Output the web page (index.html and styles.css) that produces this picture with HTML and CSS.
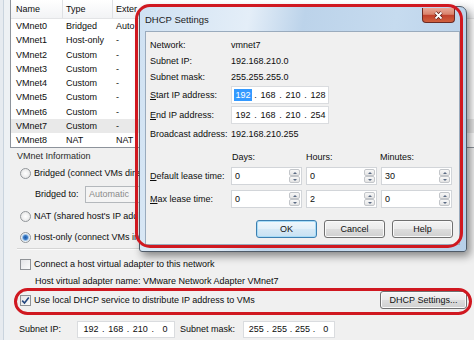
FILE: index.html
```html
<!DOCTYPE html>
<html lang="en">
<head>
    <meta charset="UTF-8">
    <title>Virtual Network Editor</title>
    <link rel="stylesheet" href="styles.css">
</head>
<body>
    <div class="window">
        <div class="frame-left"></div>
        <div class="main">
            <!-- only the part left of the dialog is visible -->
            <div class="net-table">
                <div class="row head"><span class="c1">Name</span><span class="c2">Type</span><span class="c3">Exter</span></div>
                <div class="row"><span class="c1">VMnet0</span><span class="c2">Bridged</span><span class="c3">Auto</span></div>
                <div class="row"><span class="c1">VMnet1</span><span class="c2">Host-only</span><span class="c3">-</span></div>
                <div class="row"><span class="c1">VMnet2</span><span class="c2">Custom</span><span class="c3">-</span></div>
                <div class="row"><span class="c1">VMnet3</span><span class="c2">Custom</span><span class="c3">-</span></div>
                <div class="row"><span class="c1">VMnet4</span><span class="c2">Custom</span><span class="c3">-</span></div>
                <div class="row"><span class="c1">VMnet5</span><span class="c2">Custom</span><span class="c3">-</span></div>
                <div class="row"><span class="c1">VMnet6</span><span class="c2">Custom</span><span class="c3">-</span></div>
                <div class="row selected"><span class="c1">VMnet7</span><span class="c2">Custom</span><span class="c3">-</span></div>
                <div class="row"><span class="c1">VMnet8</span><span class="c2">NAT</span><span class="c3">NAT</span></div>
            </div>

            <div class="info">
                <div class="group-title">VMnet Information</div>
                <div class="opt h20"><span class="radio"></span>Bridged (connect VMs dire</div>
                <div class="bridged-to"><span class="bt-label">Bridged to:</span><span class="combo">Automatic</span></div>
                <div class="opt h22"><span class="radio"></span>NAT (shared host's IP add</div>
                <div class="opt h20"><span class="radio on"></span>Host-only (connect VMs in</div>
                <div class="sep"></div>
                <div class="opt connect"><span class="check"></span>Connect a host virtual adapter to this network</div>
                <div class="adapter">Host virtual adapter name: VMware Network Adapter VMnet7</div>
                <div class="opt h22">
                    <span class="check"><svg width="9" height="9" viewBox="0 0 9 9"><path d="M1.2 4.6 L3.5 7 L7.8 1.6" fill="none" stroke="#23467e" stroke-width="1.6"/></svg></span>
                    Use local DHCP service to distribute IP address to VMs
                    <button class="btn dhcp-btn">DHCP Settings...</button>
                </div>
                <div class="subnet-row">
                    <span class="sn-label">Subnet IP:</span>
                    <span class="ipbox sn-ip"><span class="seg">192</span><span class="dot">.</span><span class="seg">168</span><span class="dot">.</span><span class="seg">210</span><span class="dot">.</span><span class="seg">0</span></span>
                    <span class="sm-label">Subnet mask:</span>
                    <span class="ipbox sn-mask"><span class="seg">255</span><span class="dot">.</span><span class="seg">255</span><span class="dot">.</span><span class="seg">255</span><span class="dot">.</span><span class="seg">0</span></span>
                </div>
            </div>
        </div>
    </div>

    <div class="dialog">
        <div class="titlebar">
            <span class="title">DHCP Settings</span>
            <span class="close"><svg width="11" height="9" viewBox="0 0 11 9"><path d="M2.5 1.5 L8.5 7.5 M8.5 1.5 L2.5 7.5" stroke="#5a1b16" stroke-width="3.2"/><path d="M2.5 1.5 L8.5 7.5 M8.5 1.5 L2.5 7.5" stroke="#fff" stroke-width="1.8"/></svg></span>
        </div>
        <div class="client">
            <div class="drow"><span class="lbl">Network:</span><span>vmnet7</span></div>
            <div class="drow"><span class="lbl">Subnet IP:</span><span>192.168.210.0</span></div>
            <div class="drow"><span class="lbl">Subnet mask:</span><span>255.255.255.0</span></div>
            <div class="drow field-row start-row">
                <span class="lbl"><u>S</u>tart IP address:</span>
                <span class="ipbox dlg-ip"><span class="seg"><span class="hl">192</span></span><span class="dot">.</span><span class="seg">168</span><span class="dot">.</span><span class="seg">210</span><span class="dot">.</span><span class="seg">128</span></span>
            </div>
            <div class="drow field-row">
                <span class="lbl"><u>E</u>nd IP address:</span>
                <span class="ipbox dlg-ip"><span class="seg">192</span><span class="dot">.</span><span class="seg">168</span><span class="dot">.</span><span class="seg">210</span><span class="dot">.</span><span class="seg">254</span></span>
            </div>
            <div class="drow bcast-row"><span class="lbl">Broadcast address:</span><span>192.168.210.255</span></div>
            <div class="drow units-row">
                <span class="lbl"></span>
                <span class="unit">Days:</span><span class="unit">Hours:</span><span class="unit">Minutes:</span>
            </div>
            <div class="drow lease-row default-row">
                <span class="lbl"><u>D</u>efault lease time:</span>
                <span class="spin"><span class="spin-val">0</span><span class="spin-btns"><i class="up"></i><i class="down"></i></span></span>
                <span class="spin"><span class="spin-val">0</span><span class="spin-btns"><i class="up"></i><i class="down"></i></span></span>
                <span class="spin"><span class="spin-val">30</span><span class="spin-btns"><i class="up"></i><i class="down"></i></span></span>
            </div>
            <div class="drow lease-row max-row">
                <span class="lbl"><u>M</u>ax lease time:</span>
                <span class="spin"><span class="spin-val">0</span><span class="spin-btns"><i class="up"></i><i class="down"></i></span></span>
                <span class="spin"><span class="spin-val">2</span><span class="spin-btns"><i class="up"></i><i class="down"></i></span></span>
                <span class="spin"><span class="spin-val">0</span><span class="spin-btns"><i class="up"></i><i class="down"></i></span></span>
            </div>
            <div class="btns">
                <button class="btn focus">OK</button>
                <button class="btn">Cancel</button>
                <button class="btn">Help</button>
            </div>
        </div>
    </div>

    <div class="mark mark-dialog"></div>
    <div class="mark mark-dhcp"></div>
</body>
</html>
```

FILE: styles.css
```css
body {
    margin: 0;
    width: 474px;
    height: 340px;
    overflow: hidden;
    position: relative;
    background-color: #f0f0f0;
    font-family: "Liberation Sans", Arial, sans-serif;
    font-size: 9px;
    color: #0d0d0d;
}

.window {
    display: flex;
    height: 340px;
}

.frame-left {
    width: 10px;
    flex-shrink: 0;
    background: linear-gradient(to right, #e6ebf0 0, #e6ebf0 3px, #c9d4de 3px, #c9d4de 4px, #edf1f4 4px);
}

.main {
    flex: 1;
    display: flex;
    flex-direction: column;
}

/* network list */
.net-table {
    background-color: white;
    border-left: 1px solid #8d939b;
    border-bottom: 1px solid #8d939b;
}

.row {
    display: flex;
    align-items: center;
    height: 14.25px;
}

.row.head {
    height: 19px;
    background: linear-gradient(#ffffff, #f2f3f5);
    border-bottom: 1px solid #e3e4e6;
    box-sizing: border-box;
}

.row.selected {
    background-color: #e9e9e9;
}

.c1 {
    width: 51px;
    padding-left: 5px;
    box-sizing: border-box;
}

.c2 {
    width: 50px;
    padding-left: 4px;
    box-sizing: border-box;
}

.c3 {
    flex: 1;
    padding-left: 4px;
    white-space: nowrap;
}

.head .c2,
.head .c3 {
    border-left: 1px solid #dfe1e4;
    padding-left: 3px;
    line-height: 18px;
}

/* vmnet information */
.group-title {
    margin-top: 1px;
    height: 14px;
    line-height: 14px;
    padding-left: 7px;
    color: #2a2a2a;
}

.opt {
    display: flex;
    align-items: center;
    padding-left: 10px;
    white-space: nowrap;
}

.h20 {
    height: 20px;
}

.h22 {
    height: 22px;
}

.connect {
    margin-top: 5px;
    height: 18px;
}

.radio {
    width: 11px;
    height: 11px;
    border-radius: 50%;
    border: 1px solid #92969a;
    box-sizing: border-box;
    background: radial-gradient(circle, #ffffff 0, #e9e9e9 70%, #d4d4d4 100%);
    margin-right: 3px;
    flex-shrink: 0;
}

.radio.on {
    background: radial-gradient(circle, #1d56a3 0, #3a7cc7 2px, #9fc2e6 3px, #eef2f6 4px, #d6d9dc 100%);
}

.check {
    width: 11px;
    height: 11px;
    border: 1px solid #8f9296;
    box-sizing: border-box;
    background: linear-gradient(135deg, #e3e4e6, #fbfbfb);
    margin-right: 3px;
    flex-shrink: 0;
    display: flex;
    align-items: center;
    justify-content: center;
}

.bridged-to {
    display: flex;
    align-items: center;
    height: 22px;
    padding-left: 25px;
}

.bt-label {
    width: 50px;
}

.combo {
    width: 160px;
    height: 17px;
    line-height: 15px;
    border: 1px solid #b4b8bc;
    box-sizing: border-box;
    background-color: #f4f4f4;
    color: #8b8b8b;
    padding-left: 3px;
}

.sep {
    height: 1px;
    margin: 1px 7px 0 7px;
    background-color: #d5d5d5;
    border-bottom: 1px solid #fbfbfb;
}

.adapter {
    height: 16px;
    line-height: 16px;
    padding-left: 25px;
    white-space: nowrap;
}

.dhcp-btn {
    margin-left: auto;
    margin-right: 7px;
    width: 87px;
    height: 17px;
}

.subnet-row {
    display: flex;
    align-items: center;
    margin-top: 9px;
    height: 18px;
    padding-left: 9px;
}

.sn-label {
    width: 58px;
}

.sm-label {
    width: 63px;
    margin-left: 5px;
}

.ipbox {
    display: flex;
    align-items: center;
    height: 17px;
    box-sizing: border-box;
    background-color: white;
    border: 1px solid #dadcdf;
}

.sn-ip {
    width: 98px;
    padding-left: 4px;
}

.sn-mask {
    width: 92px;
    padding-left: 4px;
}

.seg {
    width: 18px;
    text-align: center;
}

.dot {
    width: 7px;
    text-align: center;
}

.hl {
    background-color: #3399ff;
    color: white;
    padding: 1px 1px;
}

/* buttons */
.btn {
    font-family: inherit;
    font-size: 9px;
    color: #111;
    padding: 0;
    height: 18px;
    border: 1px solid #707070;
    border-radius: 3px;
    background: linear-gradient(#f4f4f4 0%, #ebebeb 48%, #dddddd 52%, #cfcfcf 100%);
    box-shadow: inset 0 0 0 1px #fafafa;
}

.btn.focus {
    border-color: #3c7fb1;
    background: linear-gradient(#f0f7fc 0%, #e3f0f9 48%, #d6e9f6 52%, #c8e1f2 100%);
    box-shadow: inset 0 0 0 1px #a8dcf7;
}

/* dhcp dialog */
.dialog {
    position: absolute;
    left: 139px;
    top: 6px;
    width: 328px;
    height: 246px;
    box-sizing: border-box;
    border: 1px solid #4f5b68;
    border-radius: 7px 7px 3px 3px;
    background: linear-gradient(100deg, #cfe1f2 0%, #e4eef8 30%, #bcd3ea 45%, #c6dbef 70%, #b7cfe8 100%);
    box-shadow: 3px 4px 9px rgba(0, 0, 0, 0.45);
    display: flex;
    flex-direction: column;
}

.titlebar {
    height: 24px;
    display: flex;
    align-items: flex-start;
}

.title {
    padding: 7px 0 0 5px;
    font-size: 9.5px;
    color: #1b1b1b;
}

.close {
    margin-left: auto;
    margin-right: 11px;
    margin-top: 1px;
    width: 33px;
    height: 15px;
    box-sizing: border-box;
    border: 1px solid #6b2a24;
    border-top: none;
    border-radius: 0 0 4px 4px;
    background: linear-gradient(#e9a898 0%, #d9836c 45%, #c1412c 52%, #d0613f 100%);
    display: flex;
    align-items: center;
    justify-content: center;
}

.client {
    flex: 1;
    margin: 0 6px 6px 5px;
    background-color: #f0f0f0;
    border: 1px solid #9aabbd;
    padding: 5px 6px 0 4px;
}

.drow {
    display: flex;
    align-items: center;
    height: 16px;
    white-space: nowrap;
}

.lbl {
    width: 81px;
    flex-shrink: 0;
}

.field-row {
    height: 18px;
    margin-top: 2px;
}

.start-row {
    margin-top: 1px;
}

.dlg-ip {
    width: 98px;
    height: 18px;
    padding-left: 2px;
}

.bcast-row {
    margin-top: 2px;
}

.units-row {
    margin-top: 8px;
    height: 14px;
}

.unit {
    width: 71px;
    margin-right: 4px;
    padding-left: 1px;
}

.lease-row {
    height: 18px;
}

.default-row {
    margin-top: 3px;
}

.max-row {
    margin-top: 5px;
}

.spin {
    width: 71px;
    height: 18px;
    margin-right: 4px;
    flex-shrink: 0;
    box-sizing: border-box;
    border: 1px solid #d2d5d9;
    background-color: white;
    display: flex;
}

.spin-val {
    flex: 1;
    padding-left: 3px;
    line-height: 16px;
}

.spin-btns {
    width: 11px;
    display: flex;
    flex-direction: column;
    margin: 1px;
}

.spin-btns i {
    flex: 1;
    border: 1px solid #c3c6ca;
    border-radius: 2px;
    background: linear-gradient(#f8f8f8, #e4e4e4);
    display: flex;
    align-items: center;
    justify-content: center;
}

.spin-btns i::after {
    content: "";
    border-left: 2px solid transparent;
    border-right: 2px solid transparent;
}

.spin-btns .up::after {
    border-bottom: 2px solid #5b6b84;
}

.spin-btns .down::after {
    border-top: 2px solid #5b6b84;
}

.btns {
    display: flex;
    justify-content: flex-end;
    gap: 7px;
    margin-top: 12px;
}

.btns .btn {
    width: 61px;
}

/* red annotation marks drawn over the screenshot */
.mark {
    position: absolute;
    border: 3px solid #d01820;
    box-sizing: border-box;
    pointer-events: none;
}

.mark-dialog {
    left: 135px;
    top: 4px;
    width: 328px;
    height: 244px;
    border-radius: 15px;
}

.mark-dhcp {
    left: 14px;
    top: 288px;
    width: 458px;
    height: 27px;
    border-radius: 14px;
}
```
